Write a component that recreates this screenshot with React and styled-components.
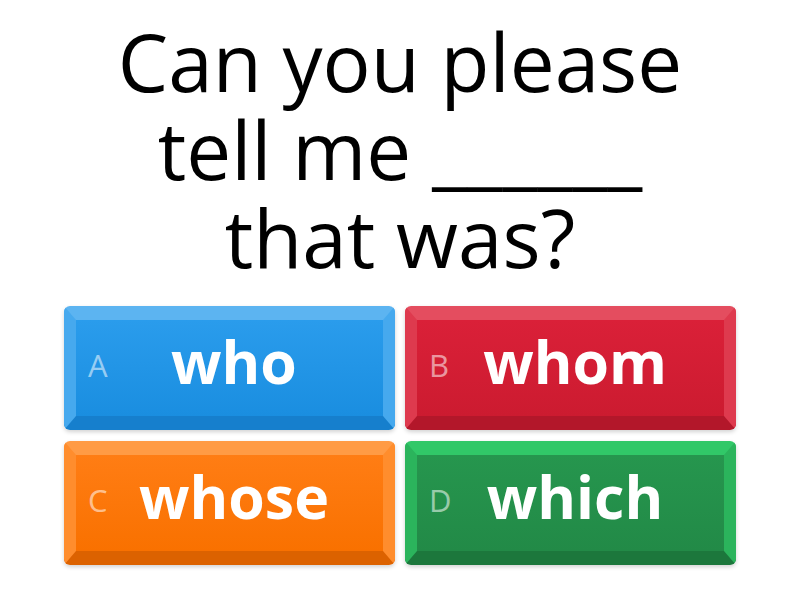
import React from "react";
import styled, { createGlobalStyle } from "styled-components";

const GlobalStyle = createGlobalStyle`
  html, body {
    margin: 0;
    padding: 0;
    background: #fff;
  }
  body {
    font-family: "Open Sans", "Noto Sans", sans-serif;
  }
`;

const palette = {
  blue: { top: "#5cb4f1", side: "#46a9ee", face: "#2a9cec", faceEnd: "#1a8ee0", bottom: "#167fcd" },
  red: { top: "#e44d5f", side: "#de3a4e", face: "#da2038", faceEnd: "#cc1b30", bottom: "#b3172a" },
  orange: { top: "#ff9b45", side: "#ff8d2d", face: "#ff7d14", faceEnd: "#f97100", bottom: "#dc6200" },
  green: { top: "#31c868", side: "#2bb45c", face: "#26964e", faceEnd: "#228a47", bottom: "#1c773c" },
};

const Page = styled.div`
  width: 800px;
  height: 600px;
  display: flex;
  flex-direction: column;
  align-items: center;
  box-sizing: border-box;
  padding-top: 17px;
`;

const Question = styled.h1`
  margin: 0;
  width: 640px;
  font-size: 80px;
  font-weight: 400;
  line-height: 88px;
  color: #000;
  text-align: center;
`;

const Answers = styled.div`
  margin-top: 25px;
  display: grid;
  grid-template-columns: repeat(2, 331px);
  grid-auto-rows: 124px;
  column-gap: 10px;
  row-gap: 11px;
`;

const Key = styled.button`
  box-sizing: border-box;
  display: flex;
  align-items: center;
  padding: 0 36px 0 0;
  border-style: solid;
  border-width: 14px 12px 14px 12px;
  border-radius: 6px;
  border-top-color: ${(p) => palette[p.$tone].top};
  border-left-color: ${(p) => palette[p.$tone].side};
  border-right-color: ${(p) => palette[p.$tone].side};
  border-bottom-color: ${(p) => palette[p.$tone].bottom};
  background: linear-gradient(
    ${(p) => palette[p.$tone].face},
    ${(p) => palette[p.$tone].faceEnd}
  );
  box-shadow: 0 2px 4px rgba(0, 0, 0, 0.18);
  font-family: inherit;
  cursor: pointer;
`;

const Letter = styled.span`
  width: 45px;
  flex: none;
  padding-left: 12px;
  padding-bottom: 6px;
  box-sizing: border-box;
  text-align: left;
  font-size: 31px;
  font-weight: 400;
  color: rgba(255, 255, 255, 0.55);
`;

const Word = styled.span`
  flex: 1;
  text-align: center;
  font-size: 59px;
  font-weight: 700;
  color: #fff;
  line-height: 1;
  padding-bottom: 14px;
`;

const answers = [
  { letter: "A", word: "who", tone: "blue" },
  { letter: "B", word: "whom", tone: "red" },
  { letter: "C", word: "whose", tone: "orange" },
  { letter: "D", word: "which", tone: "green" },
];

export default function App() {
  return (
    <>
      <GlobalStyle />
      <Page>
        <Question>
          Can you please tell me ______ that was?
        </Question>
        <Answers>
          {answers.map((a) => (
            <Key key={a.letter} $tone={a.tone}>
              <Letter>{a.letter}</Letter>
              <Word>{a.word}</Word>
            </Key>
          ))}
        </Answers>
      </Page>
    </>
  );
}
